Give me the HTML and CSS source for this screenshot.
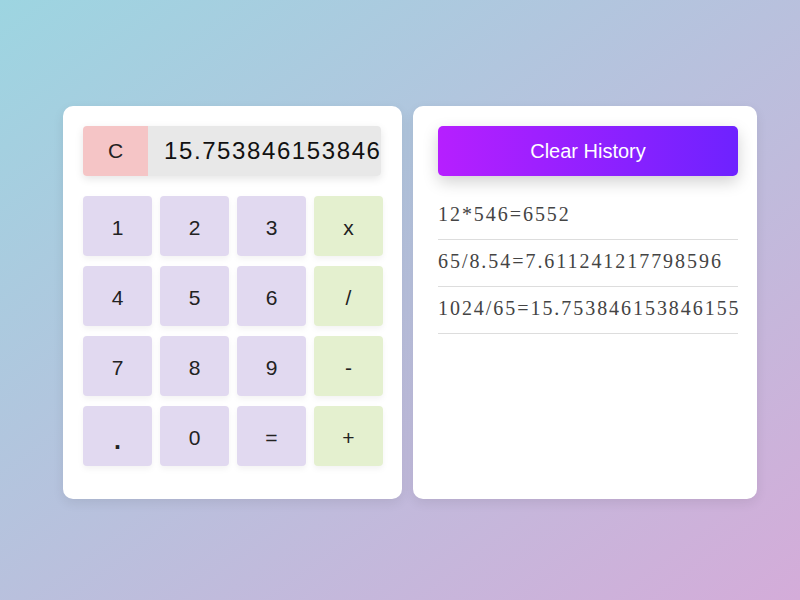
FILE: index.html
```html
<!DOCTYPE html>
<html>
<head>
<meta charset="utf-8">
<link rel="stylesheet" href="styles.css">
</head>
<body>
<div class="wrap">
  <div class="card calc">
    <div class="display">
      <div class="clear">C</div>
      <div class="screen">15.753846153846155</div>
    </div>
    <div class="keys">
      <div class="key">1</div>
      <div class="key">2</div>
      <div class="key">3</div>
      <div class="key op">x</div>
      <div class="key">4</div>
      <div class="key">5</div>
      <div class="key">6</div>
      <div class="key op">/</div>
      <div class="key">7</div>
      <div class="key">8</div>
      <div class="key">9</div>
      <div class="key op">-</div>
      <div class="key dot">.</div>
      <div class="key">0</div>
      <div class="key">=</div>
      <div class="key op">+</div>
    </div>
  </div>
  <div class="card history">
    <div class="clear-history">Clear History</div>
    <ul class="list">
      <li>12*546=6552</li>
      <li>65/8.54=7.611241217798596</li>
      <li>1024/65=15.753846153846155</li>
    </ul>
  </div>
</div>
</body>
</html>
```
FILE: styles.css
```css
html, body {
  margin: 0;
  height: 100%;
}
body {
  background: linear-gradient(to bottom right, #9dd5e1, #d4acd9);
  font-family: "Liberation Sans", Arial, sans-serif;
}
.wrap {
  display: flex;
  gap: 11px;
  padding: 106px 0 0 63px;
  align-items: flex-start;
}
.card {
  background: #fff;
  border-radius: 10px;
  box-shadow: 0 4px 12px rgba(0, 0, 0, 0.08);
  box-sizing: border-box;
  height: 393px;
}
.calc {
  width: 339px;
  padding: 20px 20px 0 20px;
}
.display {
  display: flex;
  height: 50px;
  border-radius: 4px;
  overflow: hidden;
  box-shadow: 0 3px 8px rgba(0, 0, 0, 0.1);
  width: 298px;
}
.clear {
  width: 65px;
  flex: none;
  background: #f5c5c6;
  display: flex;
  align-items: center;
  justify-content: center;
  font-size: 21px;
  color: #222;
}
.screen {
  flex: 1;
  background: #e8e8e8;
  display: flex;
  align-items: center;
  padding-left: 16px;
  font-size: 24px;
  letter-spacing: 1.6px;
  color: #111;
  white-space: nowrap;
  overflow: hidden;
}
.keys {
  margin-top: 20px;
  display: grid;
  grid-template-columns: repeat(4, 69px);
  grid-auto-rows: 60px;
  column-gap: 8px;
  row-gap: 10px;
}
.key {
  background: #e1d9f0;
  border-radius: 4px;
  display: flex;
  align-items: center;
  justify-content: center;
  font-size: 21px;
  padding-top: 4px;
  box-sizing: border-box;
  color: #222;
  box-shadow: 0 3px 6px rgba(0, 0, 0, 0.05);
}
.key.op {
  background: #e4f0cf;
}
.key.dot {
  font-size: 25px;
  font-weight: bold;
  padding-top: 8px;
}
.history {
  width: 344px;
  padding: 20px 19px 0 25px;
}
.clear-history {
  width: 300px;
  height: 50px;
  border-radius: 5px;
  background: linear-gradient(to right, #b61fff, #6e22ff);
  color: #fff;
  font-size: 20px;
  display: flex;
  align-items: center;
  justify-content: center;
  box-shadow: 0 6px 16px rgba(0, 0, 0, 0.18);
}
.list {
  list-style: none;
  margin: 17px 0 0 0;
  padding: 0;
  width: 300px;
}
.list li {
  font-family: "Liberation Serif", "Times New Roman", serif;
  font-size: 20px;
  letter-spacing: 1.95px;
  color: #444;
  line-height: 23px;
  padding: 10px 0 13px 0;
  border-bottom: 1px solid #ddd;
  white-space: nowrap;
}
```
